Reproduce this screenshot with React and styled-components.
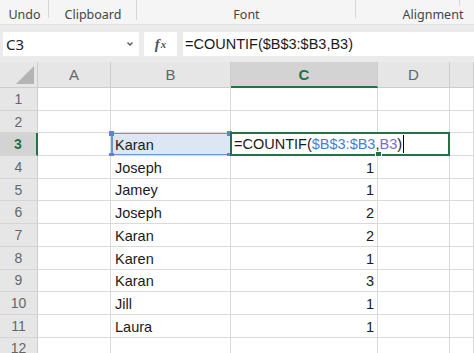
import styled, { createGlobalStyle } from "styled-components";

const GlobalStyle = createGlobalStyle`
  body {
    margin: 0;
    font-family: "Liberation Sans", Arial, sans-serif;
    background: #ffffff;
  }
`;

const Window = styled.div`
  width: 474px;
  height: 353px;
  overflow: hidden;
  background: #ffffff;
`;

// ribbon strip (only the group labels are visible)
const Ribbon = styled.div`
  display: flex;
  height: 24px;
  background: #f5f5f5;
  border-bottom: 1px solid #e2e2e2;
`;

const RibbonGroup = styled.div`
  position: relative;
  flex: 0 0 ${(p) => p.$width}px;
  display: flex;
  justify-content: center;
  align-items: flex-end;
  padding-bottom: 1px;
  box-sizing: border-box;
  font-family: "Noto Sans", "Open Sans", sans-serif;
  font-size: 12.5px;
  color: #444444;

  &::after {
    content: "";
    position: absolute;
    right: 0;
    top: 0;
    width: 1px;
    height: ${(p) => p.$sep}px;
    background: #d6d6d6;
  }
`;

const TinyMark = styled.div`
  position: absolute;
  left: 103px;
  top: 0;
  width: 1px;
  height: 6px;
  background: #d6d6d6;
`;

const FormulaBar = styled.div`
  display: flex;
  height: 37px;
  box-sizing: border-box;
  padding: 7px 0 6px 3px;
  background: #ebebeb;
`;

const NameBox = styled.div`
  width: 136px;
  background: #ffffff;
  display: flex;
  align-items: center;
  justify-content: space-between;
  padding: 0 4px 0 3px;
  box-sizing: border-box;
  font-family: "Noto Sans", "Open Sans", sans-serif;
  font-size: 15px;
  color: #222222;
`;

const FxButton = styled.div`
  width: 33px;
  margin-left: 5px;
  background: #ffffff;
  display: flex;
  align-items: center;
  justify-content: center;
  font-family: "Liberation Serif", "DejaVu Serif", serif;
  font-style: italic;
  font-weight: bold;
  font-size: 15px;
  color: #555555;

  sub {
    font-size: 11px;
    vertical-align: -1px;
    margin-left: 1px;
  }
`;

const FormulaInput = styled.div`
  flex: 1;
  margin-left: 6px;
  background: #ffffff;
  display: flex;
  align-items: center;
  padding-left: 2px;
  font-size: 14.5px;
  color: #1a1a1a;
  white-space: nowrap;
`;

const Sheet = styled.div`
  display: grid;
  grid-template-columns: 38px 73px 120px 147px 72px 1fr;
  grid-template-rows: 26px repeat(12, 22.7px);
`;

const Corner = styled.div`
  background: #e6e6e6;
  border-right: 1px solid #cdcdcd;
  border-bottom: 1px solid #cdcdcd;
  position: relative;

  &::after {
    content: "";
    position: absolute;
    right: 3px;
    bottom: 3px;
    width: 18px;
    height: 18px;
    background: #b4b4b4;
    clip-path: polygon(100% 0, 100% 100%, 0 100%);
  }
`;

const ColHeader = styled.div`
  display: flex;
  align-items: center;
  justify-content: center;
  background: ${(p) => (p.$active ? "#d3d3d3" : "#e6e6e6")};
  border-right: 1px solid #cdcdcd;
  border-bottom: ${(p) => (p.$active ? "2px solid #217346" : "1px solid #cdcdcd")};
  box-sizing: border-box;
  font-size: 15px;
  font-weight: ${(p) => (p.$active ? "bold" : "normal")};
  color: ${(p) => (p.$active ? "#217346" : "#666666")};
`;

const RowHeader = styled.div`
  display: flex;
  align-items: center;
  justify-content: center;
  background: ${(p) => (p.$active ? "#d3d3d3" : "#e6e6e6")};
  border-right: ${(p) => (p.$active ? "2px solid #217346" : "1px solid #cdcdcd")};
  border-bottom: 1px solid #d4d4d4;
  box-sizing: border-box;
  font-size: 14px;
  font-weight: ${(p) => (p.$active ? "bold" : "normal")};
  color: ${(p) => (p.$active ? "#217346" : "#666666")};
`;

const Cell = styled.div`
  position: relative;
  display: flex;
  align-items: flex-end;
  justify-content: ${(p) => (p.$right ? "flex-end" : "flex-start")};
  padding: 0 3px 2px 4px;
  box-sizing: border-box;
  border-right: 1px solid #dadada;
  border-bottom: 1px solid #dadada;
  background: ${(p) => (p.$selected ? "#dce6f5" : "#ffffff")};
  box-shadow: ${(p) =>
    p.$selected ? "inset 0 1px 0 #6f93d8, inset 0 -1px 0 #6f93d8, inset 2px 0 0 #6f93d8" : "none"};
  font-size: 14.5px;
  color: #1a1a1a;
  white-space: nowrap;
`;

const Handle = styled.span`
  position: absolute;
  width: 5px;
  height: 5px;
  background: #5b84d6;
  ${(p) => (p.$top ? "top: -2px;" : "bottom: -3px;")}
  ${(p) => (p.$left ? "left: -2px;" : "right: -2px;")}
`;

const EditCell = styled.div`
  grid-column: span 2;
  position: relative;
  display: flex;
  align-items: flex-end;
  padding: 0 0 2px 2px;
  box-sizing: border-box;
  margin: -1px 0 0 -1px;
  border: 2px solid #217346;
  background: #ffffff;
  font-size: 14.5px;
  color: #1a1a1a;
  white-space: nowrap;
`;

const FillHandle = styled.span`
  position: absolute;
  left: 143px;
  bottom: -4px;
  width: 5px;
  height: 5px;
  background: #217346;
  border: 1px solid #ffffff;
`;

const Caret = styled.span`
  display: inline-block;
  width: 1px;
  height: 18px;
  margin-left: 1px;
  margin-bottom: -1px;
  background: #000000;
`;

const Ref = styled.span`
  color: ${(p) => p.$color};
`;

const names = ["", "", "Karan", "Joseph", "Jamey", "Joseph", "Karan", "Karen", "Karan", "Jill", "Laura", ""];
const counts = ["", "", null, 1, 1, 2, 2, 1, 3, 1, 1, ""];
const columns = ["A", "B", "C", "D", ""];

const Formula = () => (
  <>
    =COUNTIF(<Ref $color="#4a7bd6">$B$3:$B3</Ref>,<Ref $color="#7a6cd4">B3</Ref>)
  </>
);

const App = () => {
  return (
    <Window>
      <GlobalStyle />
      <Ribbon>
        <RibbonGroup $width={49} $sep={18}>Undo</RibbonGroup>
        <RibbonGroup $width={88} $sep={20}>Clipboard</RibbonGroup>
        <RibbonGroup $width={219} $sep={18}>Font</RibbonGroup>
        <RibbonGroup $width={154} $sep={0}>
          <TinyMark />
          Alignment
        </RibbonGroup>
      </Ribbon>

      <FormulaBar>
        <NameBox>
          C3
          <svg width="10" height="8" viewBox="0 0 10 8">
            <path d="M2.5 2.5 L5 5 L7.5 2.5" fill="none" stroke="#555" strokeWidth="1.3" />
          </svg>
        </NameBox>
        <FxButton>
          f<sub>x</sub>
        </FxButton>
        <FormulaInput>
          =COUNTIF($B$3:$B3,B3)
        </FormulaInput>
      </FormulaBar>

      <Sheet>
        <Corner />
        {columns.map((c, i) => (
          <ColHeader key={i} $active={c === "C"}>
            {c}
          </ColHeader>
        ))}

        {names.map((name, r) => {
          const row = r + 1;
          if (row === 3) {
            return [
              <RowHeader key="h3" $active>3</RowHeader>,
              <Cell key="a3" />,
              <Cell key="b3" $selected>
                {name}
                <Handle $top $left />
                <Handle $top />
                <Handle $left />
                <Handle />
              </Cell>,
              <EditCell key="c3">
                <Formula />
                <Caret />
                <FillHandle />
              </EditCell>,
              <Cell key="e3" />,
            ];
          }
          return [
            <RowHeader key={`h${row}`}>{row}</RowHeader>,
            <Cell key={`a${row}`} />,
            <Cell key={`b${row}`}>{name}</Cell>,
            <Cell key={`c${row}`} $right>
              {counts[r]}
            </Cell>,
            <Cell key={`d${row}`} />,
            <Cell key={`e${row}`} />,
          ];
        })}
      </Sheet>
    </Window>
  );
};

export default App;
